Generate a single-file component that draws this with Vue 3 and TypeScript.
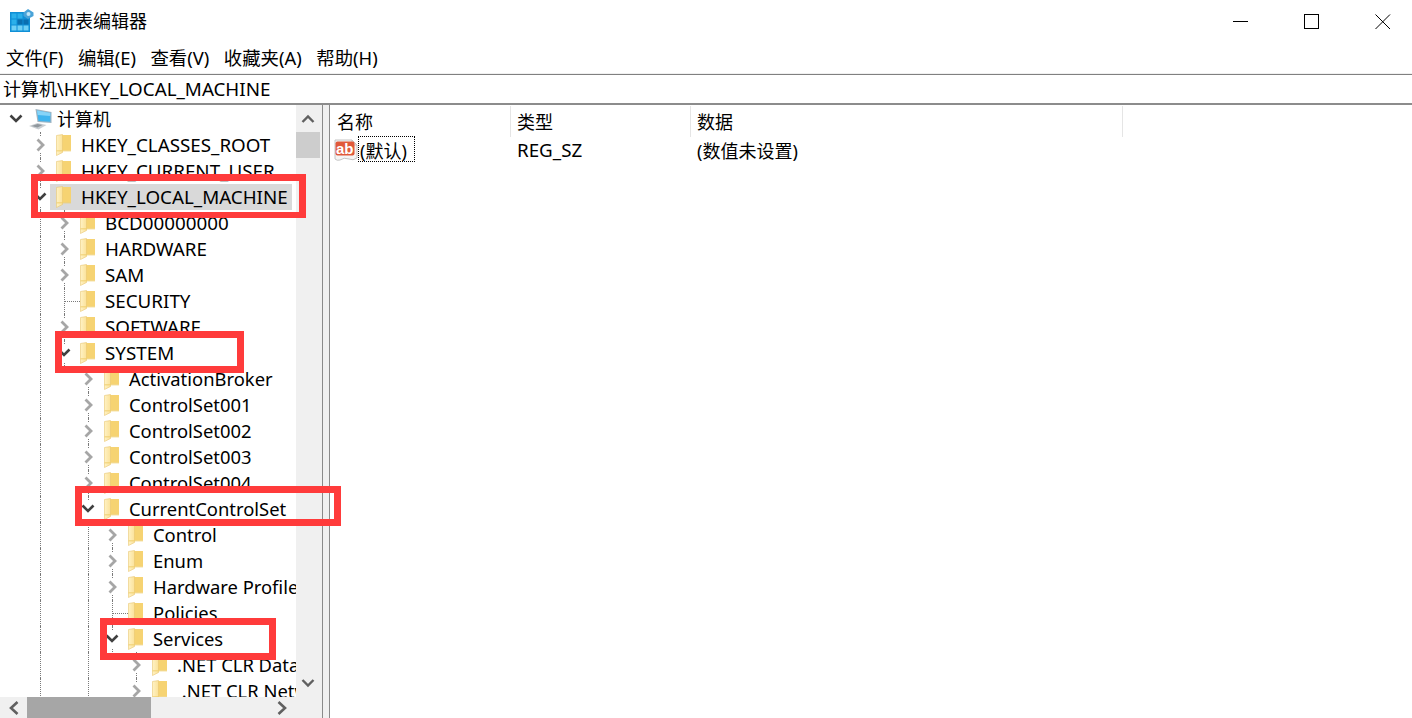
<script setup lang="ts">
type State = 'open' | 'closed' | 'leaf'
interface Node { label: string; depth: number; state: State; selected?: boolean; computer?: boolean }

const menus: string[] = ['文件(F)', '编辑(E)', '查看(V)', '收藏夹(A)', '帮助(H)']

const nodes: Node[] = [
  { label: '计算机', depth: 0, state: 'open', computer: true },
  { label: 'HKEY_CLASSES_ROOT', depth: 1, state: 'closed' },
  { label: 'HKEY_CURRENT_USER', depth: 1, state: 'closed' },
  { label: 'HKEY_LOCAL_MACHINE', depth: 1, state: 'open', selected: true },
  { label: 'BCD00000000', depth: 2, state: 'closed' },
  { label: 'HARDWARE', depth: 2, state: 'closed' },
  { label: 'SAM', depth: 2, state: 'closed' },
  { label: 'SECURITY', depth: 2, state: 'leaf' },
  { label: 'SOFTWARE', depth: 2, state: 'closed' },
  { label: 'SYSTEM', depth: 2, state: 'open' },
  { label: 'ActivationBroker', depth: 3, state: 'closed' },
  { label: 'ControlSet001', depth: 3, state: 'closed' },
  { label: 'ControlSet002', depth: 3, state: 'closed' },
  { label: 'ControlSet003', depth: 3, state: 'closed' },
  { label: 'ControlSet004', depth: 3, state: 'closed' },
  { label: 'CurrentControlSet', depth: 3, state: 'open' },
  { label: 'Control', depth: 4, state: 'closed' },
  { label: 'Enum', depth: 4, state: 'closed' },
  { label: 'Hardware Profiles', depth: 4, state: 'closed' },
  { label: 'Policies', depth: 4, state: 'leaf' },
  { label: 'Services', depth: 4, state: 'open' },
  { label: '.NET CLR Data', depth: 5, state: 'closed' },
  { label: ' .NET CLR Networking', depth: 5, state: 'closed' },
]

function hasGuide(col: number, depth: number): boolean {
  return (col === 1 && depth >= 2) || (col === 3 && depth >= 4)
}

function labelClass(n: Node): string {
  if (n.computer) return 'cjk'
  return /[a-z]/.test(n.label) ? 'mixed' : 'latin'
}

const columns: { label: string; width: number }[] = [
  { label: '名称', width: 180 },
  { label: '类型', width: 180 },
  { label: '数据', width: 432 },
]

const marks: { name: string }[] = [
  { name: 'mark-hklm' },
  { name: 'mark-system' },
  { name: 'mark-ccs' },
  { name: 'mark-services' },
]
</script>

<template>
  <div class="window">
    <header class="titlebar">
      <svg class="app-icon" width="24" height="26" viewBox="0 0 24 26">
        <rect x="0" y="3" width="20" height="20" fill="#0f8fd6" />
        <g fill="#2bb0ea">
          <rect x="1.500" y="4.500" width="5" height="5" />
          <rect x="7.500" y="4.500" width="5" height="5" />
          <rect x="1.500" y="10.500" width="5" height="5" />
        </g>
        <g fill="#0a6fb0">
          <rect x="7.500" y="10.500" width="5" height="5" />
          <rect x="13.500" y="10.500" width="5" height="5" />
        </g>
        <g fill="#6fd0f5">
          <rect x="1.500" y="16.500" width="5" height="5" />
          <rect x="7.500" y="16.500" width="5" height="5" />
          <rect x="13.500" y="16.500" width="5" height="5" />
        </g>
        <path d="M18 0 L23.500 3.500 L23.500 7 L18 10 L13.500 7 L13.500 3.500 Z" fill="#4aa3d8" />
        <circle cx="18.500" cy="5" r="2" fill="#bfe6f7" />
      </svg>
      <span class="title">注册表编辑器</span>
      <div class="controls">
        <svg width="16" height="16" viewBox="0 0 16 16"><path d="M0 7.500H15" stroke="#000" stroke-width="1" /></svg>
        <svg width="16" height="16" viewBox="0 0 16 16"><rect x="0.500" y="0.500" width="14" height="14" fill="none" stroke="#000" stroke-width="1" /></svg>
        <svg width="16" height="16" viewBox="0 0 16 16"><path d="M0.500 0.500L15 15M15 0.500L0.500 15" stroke="#000" stroke-width="1" /></svg>
      </div>
    </header>

    <nav class="menubar">
      <span v-for="m in menus" :key="m" class="menu">{{ m }}</span>
    </nav>

    <div class="address"><span class="cjk">计算机\</span><span class="latin">HKEY_LOCAL_MACHINE</span></div>

    <main class="body">
      <section class="tree-pane">
        <div class="tree-top">
          <div class="tree">
            <div v-for="n in nodes" :key="n.label" class="row">
              <span
                v-for="c in n.depth"
                :key="c"
                class="cell"
                :class="{ guide: hasGuide(c - 1, n.depth) }"
              ></span>
              <span class="cell twist" :class="[n.state, { own: n.depth > 0 }]">
                <svg v-if="n.state === 'open'" class="chev" width="16" height="12" viewBox="0 0 16 12">
                  <path d="M2.500 2.500L8 8L13.500 2.500" fill="none" stroke="#404040" stroke-width="2.600" />
                </svg>
                <svg v-else-if="n.state === 'closed'" class="chev" width="14" height="16" viewBox="0 0 14 16">
                  <path d="M3.500 2.500L9 8L3.500 13.500" fill="none" stroke="#a6a6a6" stroke-width="2.800" />
                </svg>
              </span>
              <span class="item" :class="{ selected: n.selected, 'item-root': n.computer }">
                <svg v-if="n.computer" class="computer" width="25" height="24" viewBox="0 0 24 24">
                  <path d="M7 2L23 5L23 16L9 15Z" fill="#9fb4c2" />
                  <path d="M8.500 3.500L21.800 6L21.800 14.800L10 14Z" fill="#3fb4ee" />
                  <path d="M8.500 3.500L21.800 6L21.800 9L9.200 8Z" fill="#86d4f8" />
                  <path d="M0.500 19L9 16L18 18L10 22.500Z" fill="#c9ced2" />
                  <path d="M3 19L9 17L14 18L9 20.500Z" fill="#8f979d" />
                </svg>
                <svg v-else class="folder" width="15" height="22" viewBox="0 0 15 22">
                  <defs>
                    <linearGradient id="fold-front" x1="0" y1="0" x2="1" y2="0">
                      <stop offset="0" stop-color="#fff2c4" />
                      <stop offset="1" stop-color="#fbe29a" />
                    </linearGradient>
                  </defs>
                  <path d="M6 1H15V16.500H6Z" fill="#f6d372" />
                  <path d="M0.500 1.500L6.500 0.500V18.500L0.500 21.500Z" fill="url(#fold-front)" stroke="#e9c872" stroke-width="0.600" />
                  <path d="M0.500 17.500H15V16H0.500Z" fill="#efcb68" opacity="0.600" />
                </svg>
                <span class="label" :class="labelClass(n)">{{ n.label }}</span>
              </span>
            </div>
          </div>
          <div class="vscroll">
            <svg width="16" height="12" viewBox="0 0 16 12" class="arrow-up"><path d="M2.500 9L8 3.500L13.500 9" fill="none" stroke="#606060" stroke-width="2.400" /></svg>
            <div class="vthumb"></div>
            <div class="spacer"></div>
            <svg width="16" height="12" viewBox="0 0 16 12" class="arrow-down"><path d="M2.500 3L8 8.500L13.500 3" fill="none" stroke="#606060" stroke-width="2.400" /></svg>
          </div>
        </div>
        <div class="hscroll">
          <svg width="27" height="21" viewBox="0 0 27 21"><path d="M17.500 5L11 11L17.500 17" fill="none" stroke="#606060" stroke-width="2.600" /></svg>
          <div class="hthumb"></div>
          <div class="spacer"></div>
          <svg width="27" height="21" viewBox="0 0 27 21"><path d="M9.500 5L16 11L9.500 17" fill="none" stroke="#606060" stroke-width="2.600" /></svg>
        </div>
      </section>
      <div class="splitter"></div>
      <section class="list-pane">
        <div class="list-head">
          <span v-for="c in columns" :key="c.label" class="col" :style="{ width: c.width + 'px' }">{{ c.label }}</span>
        </div>
        <div class="list-row">
          <svg class="ab" width="24" height="23" viewBox="0 0 24 23">
            <path d="M1 1H18L23 6V19Q19 22 15 20Q10 18 6 21Q3 22 1 20Z" fill="#f4f4f4" stroke="#c4c4c4" stroke-width="1" />
            <path d="M18 1V6H23" fill="none" stroke="#c4c4c4" stroke-width="1" />
            <rect x="1.500" y="2.500" width="19" height="14" rx="2" fill="#e0593a" />
            <text x="2" y="14.500" class="ab-text">ab</text>
          </svg>
          <span class="focus">(默认)</span>
          <span class="type latin">REG_SZ</span>
          <span class="data">(数值未设置)</span>
        </div>
      </section>
    </main>

    <div v-for="m in marks" :key="m.name" class="mark" :class="m.name"></div>
  </div>
</template>

<style>
html, body { margin: 0; background: #fff; }
</style>

<style scoped>
.window {
  position: relative;
  width: 1412px;
  height: 718px;
  overflow: hidden;
  display: flex;
  flex-direction: column;
  background: #fff;
  color: #000;
  font-family: "Noto Sans", "Noto Sans CJK SC", sans-serif;
  font-size: 18px;
}
.cjk { font-size: 18px; }
.latin { font-size: 18.8px; }
.mixed { font-size: 18.4px; }
.titlebar {
  height: 44px;
  display: flex;
  align-items: center;
  padding-left: 10px;
  flex: none;
}
.app-icon { margin-right: 5px; }
.title { line-height: 44px; margin-top: -2px; }
.controls {
  margin-left: auto;
  display: flex;
  gap: 55px;
  padding-right: 21px;
  margin-top: -1px;
}
.menubar {
  height: 30px;
  flex: none;
  display: flex;
  padding-left: 6px;
  gap: 14.5px;
  line-height: 28px;
  font-size: 18.4px;
  border-bottom: 1px solid #808080;
  box-shadow: inset 0 -1px 0 #f0f0f0;
}
.address {
  height: 28px;
  flex: none;
  line-height: 28px;
  padding-left: 3px;
  border-bottom: 2px solid #8c8c8c;
  white-space: pre;
}
.body { flex: 1; display: flex; min-height: 0; }
.tree-pane {
  width: 322px;
  flex: none;
  display: flex;
  flex-direction: column;
  background: #f0f0f0;
}
.tree-top { flex: 1; display: flex; min-height: 0; }
.tree {
  width: 296px;
  flex: none;
  overflow: hidden;
  background: #fff;
  padding: 1px 0 0 4px;
  box-sizing: border-box;
}
.row {
  display: flex;
  height: 26px;
  white-space: pre;
}
.cell {
  width: 24px;
  flex: none;
  height: 26px;
  position: relative;
}
.guide::before,
.twist.own::before,
.twist.leaf::after {
  content: "";
  position: absolute;
  left: 12px;
  top: 0;
  bottom: 0;
  border-left: 1px dotted #7a7a7a;
}
.twist.leaf::after {
  left: 12px;
  right: -4px;
  top: 13px;
  bottom: auto;
  border-left: none;
  border-top: 1px dotted #7a7a7a;
}
.chev {
  position: absolute;
  background: #fff;
}
.twist.closed .chev { left: 6px; top: 5px; }
.twist.open .chev { left: 4px; top: 7px; box-shadow: 0 -3px 0 #fff, 0 3px 0 #fff; }
.item {
  display: flex;
  align-items: center;
  height: 26px;
  margin-left: -2px;
  padding: 0 4px 0 6px;
  position: relative;
}
.item.selected { background: #d9d9d9; }
.item-root { padding-left: 2px; }
.folder { margin-right: 10px; flex: none; }
.computer { margin-right: 4px; flex: none; }
.label { line-height: 26px; }
.vscroll {
  width: 24px;
  display: flex;
  flex-direction: column;
  align-items: center;
}
.arrow-up { flex: none; margin: 8px 0 7px; }
.arrow-down { flex: none; margin: 0 0 8px; }
.vthumb { width: 24px; height: 26px; background: #cdcdcd; flex: none; }
.spacer { flex: 1; }
.hscroll {
  height: 21px;
  flex: none;
  display: flex;
  width: 296px;
  background: #f0f0f0;
}
.hthumb { width: 124px; background: #a6a6a6; flex: none; }
.splitter {
  width: 8px;
  flex: none;
  box-sizing: border-box;
  background: #f0f0f0;
  border-left: 1px solid #8a8a8a;
  border-right: 1px solid #8a8a8a;
}
.list-pane { flex: 1; background: #fff; }
.list-head {
  height: 31px;
  display: flex;
  margin-top: 1px;
  padding-left: 1px;
}
.col {
  box-sizing: border-box;
  padding-left: 6px;
  line-height: 32px;
  border-right: 1px solid #e5e5e5;
  flex: none;
}
.list-row {
  display: flex;
  align-items: center;
  height: 26px;
  margin-top: -1px;
  padding-left: 4px;
}
.ab { flex: none; margin-top: 3px; }
.ab-text {
  font-family: "Liberation Sans", sans-serif;
  font-weight: 700;
  font-size: 15px;
  fill: #fff;
}
.focus {
  box-sizing: border-box;
  width: 57px;
  height: 26px;
  line-height: 26px;
  padding: 1px 0 0 1px;
  border: 1px dotted #000;
  flex: none;
}
.type { margin-left: 102px; width: 180px; flex: none; padding-top: 2px; }
.data { flex: none; padding-top: 2px; }
.mark {
  position: absolute;
  box-sizing: border-box;
  border: 7px solid #ff3b3b;
  pointer-events: none;
}
.mark-hklm { left: 31px; top: 174px; width: 275px; height: 44px; border-width: 7px 7px 6px; }
.mark-system { left: 55px; top: 331px; width: 189px; height: 42px; }
.mark-ccs { left: 75px; top: 486px; width: 266px; height: 40px; }
.mark-services { left: 100px; top: 618px; width: 176px; height: 42px; }
</style>
